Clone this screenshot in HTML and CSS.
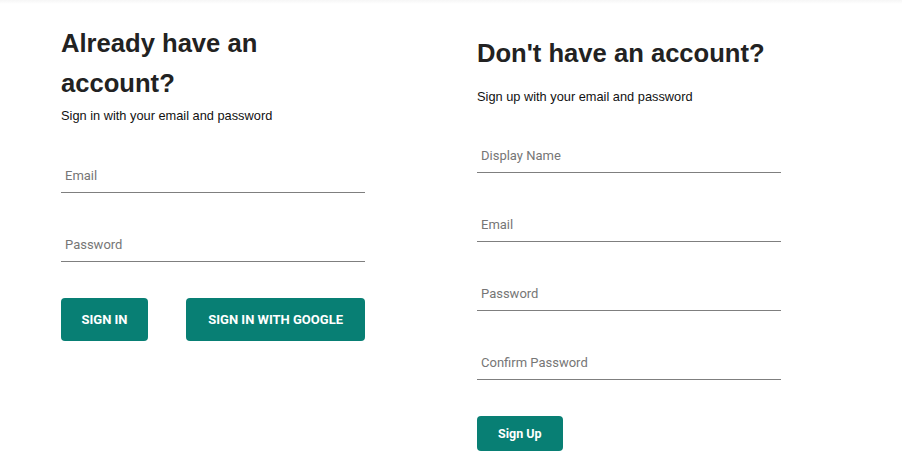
FILE: index.html
```html
<!DOCTYPE html>
<html lang="en">
<head>
<meta charset="utf-8">
<title>Sign in</title>
<link rel="stylesheet" href="styles.css">
</head>
<body>
<div class="topbar"></div>
<main class="auth">
  <section class="col col-signin">
    <h2 class="title">Already have an account?</h2>
    <p class="sub sub-signin">Sign in with your email and password</p>
    <form class="form">
      <input class="field" type="email" placeholder="Email">
      <input class="field" type="password" placeholder="Password">
      <div class="actions">
        <button type="button" class="btn btn-lg btn-narrow">SIGN IN</button>
        <button type="button" class="btn btn-lg">SIGN IN WITH GOOGLE</button>
      </div>
    </form>
  </section>
  <section class="col col-signup">
    <h2 class="title">Don't have an account?</h2>
    <p class="sub sub-signup">Sign up with your email and password</p>
    <form class="form">
      <input class="field" type="text" placeholder="Display Name">
      <input class="field" type="email" placeholder="Email">
      <input class="field" type="password" placeholder="Password">
      <input class="field" type="password" placeholder="Confirm Password">
      <div class="actions">
        <button type="button" class="btn btn-sm">Sign Up</button>
      </div>
    </form>
  </section>
</main>
</body>
</html>
```
FILE: styles.css
```css
* { box-sizing: border-box; }
html, body { margin: 0; padding: 0; background: #fff; }
body { font-family: "Liberation Sans", Arial, sans-serif; color: #111; }

.topbar {
  height: 4px;
  background: linear-gradient(#f6f6f6, #ffffff);
}

.auth {
  display: flex;
  align-items: flex-start;
  gap: 112px;
  padding-left: 61px;
}

.col {
  width: 304px;
  display: flex;
  flex-direction: column;
}

.title {
  margin: 0;
  font-family: "Liberation Sans", Arial, sans-serif;
  font-weight: 700;
  font-size: 25.6px;
  line-height: 40px;
  color: #222;
}
.col-signin .title { margin-top: 19px; }
.col-signup .title { margin-top: 29px; }

.sub {
  margin: 0;
  font-size: 12.8px;
  line-height: 15px;
  color: #111;
}
.sub-signin { margin-top: 5px; }
.sub-signup { margin-top: 16px; }

.form {
  display: flex;
  flex-direction: column;
}

.field {
  display: block;
  width: 100%;
  height: 35px;
  margin: 34px 0 0;
  padding: 0 4px;
  border: none;
  border-bottom: 1px solid #7f7f7f;
  background: transparent;
  font-family: Roboto, "Liberation Sans", sans-serif;
  font-size: 13px;
  color: #333;
  outline: none;
}
.col-signin .field:first-child { margin-top: 35px; }
.field::placeholder { color: #767676; opacity: 1; }

.actions {
  display: flex;
  justify-content: space-between;
  margin-top: 36px;
}
.col-signup .actions { justify-content: flex-start; }

.btn {
  border: none;
  border-radius: 4px;
  background: #087f74;
  color: #fff;
  font-family: Roboto, "Liberation Sans", sans-serif;
  font-weight: 700;
  font-size: 13px;
  padding: 0 22px;
  cursor: pointer;
}
.btn-lg { height: 43px; }
.btn-narrow { padding: 0 20.5px; }
.btn-sm { height: 35px; padding: 0 21px; font-size: 12.5px; }
```
